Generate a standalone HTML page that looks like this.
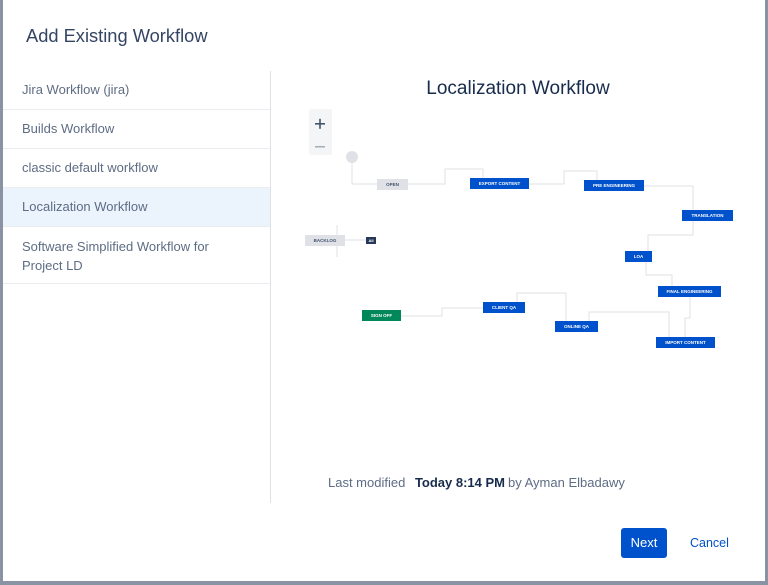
<!DOCTYPE html>
<html><head><meta charset="utf-8"><style>
html,body{margin:0;padding:0}
body{width:768px;height:585px;background:#8993a4;position:relative;overflow:hidden;font-family:"Liberation Sans",sans-serif}
.dlg{position:absolute;left:3px;top:0;width:762px;height:581px;background:#fff}
h1{position:absolute;left:23px;top:25px;margin:0;font-weight:normal;font-size:18.3px;color:#344563}
.list{position:absolute;left:0;top:71px;width:267px;height:432px;border-right:1px solid #dfe1e6}
.it{border-bottom:1px solid #ebecf0;padding:0 0 0 19px;font-size:13px;color:#5e6c84;height:38px;line-height:38px}
.sel{background:#ebf3fc}
.two{height:57px;line-height:19px;padding-top:10px;box-sizing:border-box}
.title{position:absolute;left:268px;width:494px;top:78px;text-align:center;font-size:19px;color:#172b4d}
.mod{position:absolute;left:325px;top:475px;font-size:13px;color:#5e6c84;white-space:nowrap}
.mod b{color:#172b4d;margin:0 3px 0 6px}
.next{position:absolute;left:618px;top:528px;width:46px;height:30px;background:#0052cc;color:#fff;border-radius:3px;font-size:13px;line-height:30px;text-align:center}
.cancel{position:absolute;left:687px;top:528px;line-height:30px;font-size:12.5px;color:#0052cc}
svg{position:absolute;left:0;top:0}
</style></head><body>
<div class="dlg">
<h1>Add Existing Workflow</h1>
<div class="list">
<div class="it">Jira Workflow (jira)</div>
<div class="it">Builds Workflow</div>
<div class="it">classic default workflow</div>
<div class="it sel">Localization Workflow</div>
<div class="it two">Software Simplified Workflow for<br>Project LD</div>
</div>
<div class="title">Localization Workflow</div>
<div class="mod">Last modified <b>Today 8:14 PM</b>by Ayman Elbadawy</div>
<div class="next">Next</div>
<div class="cancel">Cancel</div>
</div>
<svg width="768" height="585" font-family="Liberation Sans" font-size="4.5" font-weight="bold">
<rect x="309" y="109" width="23" height="46" rx="2" fill="#f4f5f7"/>
<rect x="315" y="123" width="10" height="1.6" fill="#42526e"/>
<rect x="319.2" y="118.8" width="1.6" height="10" fill="#42526e"/>
<rect x="315" y="146" width="10" height="1.5" fill="#a5adba"/>
<g fill="none" stroke="#dfe1e6" stroke-width="1">
<path d="M352 163V184H377"/>
<path d="M408 184H445V169H483V178"/>
<path d="M529 184H564V171H597V180"/>
<path d="M644 186H693V210"/>
<path d="M693 221V235H648V251"/>
<path d="M646 262V275H672V286"/>
<path d="M690 297V318H685V337"/>
<path d="M669 337V312H589V321"/>
<path d="M566 321V293H517V302"/>
<path d="M483 308H442V316H401"/>
<path d="M366 240H345"/>
<path d="M337 225V257"/>
</g>
<circle cx="352" cy="157" r="6" fill="#dfe1e6"/>
<g>
<rect x="377" y="179" width="31" height="11" fill="#dfe1e6"/>
<rect x="305" y="235" width="40" height="11" fill="#dfe1e6"/>
<rect x="366" y="237" width="10" height="7" fill="#253858"/>
<rect x="470" y="178" width="59" height="11" fill="#0052cc"/>
<rect x="584" y="180" width="60" height="11" fill="#0052cc"/>
<rect x="682" y="210" width="51" height="11" fill="#0052cc"/>
<rect x="625" y="251" width="27" height="11" fill="#0052cc"/>
<rect x="658" y="286" width="63" height="11" fill="#0052cc"/>
<rect x="656" y="337" width="59" height="11" fill="#0052cc"/>
<rect x="555" y="321" width="43" height="11" fill="#0052cc"/>
<rect x="483" y="302" width="42" height="11" fill="#0052cc"/>
<rect x="362" y="310" width="39" height="11" fill="#00875a"/>
</g>
<g text-anchor="middle" fill="#fff">
<text x="392.5" y="186" fill="#42526e">OPEN</text>
<text x="325" y="242" fill="#42526e">BACKLOG</text>
<text x="371" y="242" font-size="4">All</text>
<text x="499.5" y="185">EXPORT CONTENT</text>
<text x="614" y="187">PRE ENGINEERING</text>
<text x="707.5" y="217">TRANSLATION</text>
<text x="638.5" y="258">LOA</text>
<text x="689.5" y="293">FINAL ENGINEERING</text>
<text x="685.5" y="344">IMPORT CONTENT</text>
<text x="576.5" y="328">ONLINE QA</text>
<text x="504" y="309">CLIENT QA</text>
<text x="381.5" y="317">SIGN OFF</text>
</g>
</svg>
</body></html>
